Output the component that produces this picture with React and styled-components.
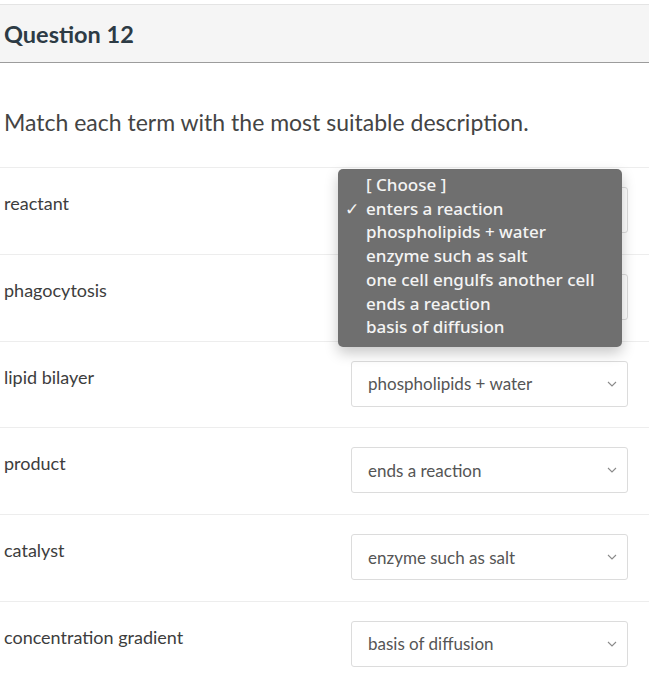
import React from 'react';
import styled, { createGlobalStyle } from 'styled-components';

const GlobalStyle = createGlobalStyle`
  body {
    margin: 0;
    background: #fff;
    font-family: Lato, "Open Sans", Arial, sans-serif;
  }
`;

const Page = styled.div`
  width: 649px;
  padding-top: 4px;
`;

const Header = styled.div`
  height: 57px;
  display: flex;
  align-items: center;
  padding-left: 4px;
  background: #f5f5f5;
  border-top: 1px solid #e4e4e4;
  border-bottom: 1px solid #9c9c9c;
  font-size: 23.5px;
  font-weight: 700;
  color: #2d3b45;
`;

const Prompt = styled.p`
  margin: 0;
  padding: 45px 0 31px 4px;
  font-size: 23px;
  line-height: 28px;
  color: #444;
`;

const Rows = styled.div`
  display: flex;
  flex-direction: column;
`;

const Row = styled.div`
  display: flex;
  justify-content: space-between;
  align-items: flex-start;
  padding: 19px 21px 20.8px 4px;
  border-top: 1px solid #ededed;
`;

const Label = styled.div`
  padding-top: 5px;
  font-size: 18px;
  line-height: 22px;
  color: #3d3d3d;
`;

const SelectWrap = styled.div`
  position: relative;
  width: 277px;
`;

const SelectBox = styled.div`
  box-sizing: border-box;
  height: 46px;
  display: flex;
  align-items: center;
  justify-content: space-between;
  padding: 0 10px 0 16px;
  border: 1px solid #dcdcdc;
  border-radius: 3px;
  background: #fff;
  font-size: 17px;
  color: #555;
`;

const Menu = styled.ul`
  position: absolute;
  top: -18px;
  left: -13px;
  width: 284px;
  box-sizing: border-box;
  margin: 0;
  padding: 4px 0 8px 0;
  list-style: none;
  background: #6f6f6f;
  border-radius: 5px;
  box-shadow: 0 6px 14px rgba(0, 0, 0, 0.22);
  font-family: "Noto Sans", Arial, sans-serif;
  font-size: 17px;
  font-weight: 500;
  line-height: 23.7px;
  color: #f4f4f4;
  z-index: 2;
`;

const MenuItem = styled.li`
  position: relative;
  padding-left: 28px;
  white-space: nowrap;
`;

const Check = styled.span`
  position: absolute;
  left: 7px;
  top: 0;
`;

const Chevron = () => (
  <svg width="10" height="6" viewBox="0 0 10 6">
    <path d="M1 1l4 4 4-4" fill="none" stroke="#8a8a8a" strokeWidth="1.1" />
  </svg>
);

const options = [
  '[ Choose ]',
  'enters a reaction',
  'phospholipids + water',
  'enzyme such as salt',
  'one cell engulfs another cell',
  'ends a reaction',
  'basis of diffusion',
];

const rows = [
  { term: 'reactant', answer: 'enters a reaction', open: true },
  { term: 'phagocytosis', answer: 'one cell engulfs another cell' },
  { term: 'lipid bilayer', answer: 'phospholipids + water' },
  { term: 'product', answer: 'ends a reaction' },
  { term: 'catalyst', answer: 'enzyme such as salt' },
  { term: 'concentration gradient', answer: 'basis of diffusion' },
];

export default function App() {
  return (
    <Page>
      <GlobalStyle />
      <Header>Question 12</Header>
      <Prompt>Match each term with the most suitable description.</Prompt>
      <Rows>
        {rows.map((r) => (
          <Row key={r.term}>
            <Label>{r.term}</Label>
            <SelectWrap>
              <SelectBox>
                <span>{r.answer}</span>
                <Chevron />
              </SelectBox>
              {r.open ? (
                <Menu>
                  {options.map((o) => (
                    <MenuItem key={o}>
                      {o === r.answer ? <Check>✓</Check> : null}
                      {o}
                    </MenuItem>
                  ))}
                </Menu>
              ) : null}
            </SelectWrap>
          </Row>
        ))}
      </Rows>
    </Page>
  );
}
